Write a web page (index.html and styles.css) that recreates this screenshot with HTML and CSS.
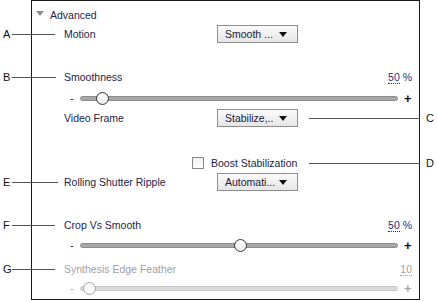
FILE: index.html
```html
<!DOCTYPE html>
<html>
<head>
<meta charset="utf-8">
<link rel="stylesheet" href="styles.css">
</head>
<body>
<div class="panel">
  <div class="hdr"><span class="tri"></span><span class="hdr-text">Advanced</span></div>

  <div class="row r-motion">
    <span class="co co-l"><span class="co-letter">A</span><span class="co-line w43"></span></span>
    <span class="lbl">Motion</span>
    <span class="dd">Smooth ...<span class="arr"></span></span>
  </div>

  <div class="row r-smooth">
    <span class="co co-l"><span class="co-letter">B</span><span class="co-line w44"></span></span>
    <span class="lbl">Smoothness</span>
    <span class="val"><span class="num">50</span> %</span>
  </div>
  <div class="srow r-s1">
    <span class="minus">-</span>
    <span class="track"><span class="thumb" style="left:21px"></span></span>
    <span class="plus">+</span>
  </div>

  <div class="row r-video">
    <span class="lbl">Video Frame</span>
    <span class="dd">Stabilize,..<span class="arr"></span></span>
    <span class="co co-r"><span class="co-line w111"></span><span class="co-letter">C</span></span>
  </div>

  <div class="row r-boost">
    <span class="chk-wrap"><span class="chk"></span><span class="chk-lbl">Boost Stabilization</span></span>
    <span class="co co-r"><span class="co-line w111"></span><span class="co-letter">D</span></span>
  </div>

  <div class="row r-roll">
    <span class="co co-l"><span class="co-letter">E</span><span class="co-line w46"></span></span>
    <span class="lbl">Rolling Shutter Ripple</span>
    <span class="dd">Automati...<span class="arr"></span></span>
  </div>

  <div class="row r-crop">
    <span class="co co-l"><span class="co-letter">F</span><span class="co-line w43"></span></span>
    <span class="lbl">Crop Vs Smooth</span>
    <span class="val"><span class="num">50</span> %</span>
  </div>
  <div class="srow r-s2">
    <span class="minus">-</span>
    <span class="track"><span class="thumb" style="left:159px"></span></span>
    <span class="plus">+</span>
  </div>

  <div class="row r-synth dis">
    <span class="co co-l"><span class="co-letter">G</span><span class="co-line w43"></span></span>
    <span class="lbl">Synthesis Edge Feather</span>
    <span class="val"><span class="num">10</span></span>
  </div>
  <div class="srow r-s3 dis">
    <span class="minus">-</span>
    <span class="track"><span class="thumb" style="left:8px"></span></span>
    <span class="plus">+</span>
  </div>
</div>
</body>
</html>
```

FILE: styles.css
```css
* { box-sizing: border-box; }
html, body { margin: 0; padding: 0; background: #ffffff; }
body {
  width: 438px;
  height: 302px;
  overflow: hidden;
  font-family: "Liberation Sans", Arial, sans-serif;
  font-size: 10.5px;
  color: #1c2448;
}
.panel {
  margin-left: 31px;
  width: 389px;
  height: 300px;
  border: 1px solid #1a1a1a;
  padding-top: 4px;
}
.hdr {
  height: 20px;
  display: flex;
  align-items: center;
  padding-left: 4px;
}
.tri {
  width: 0; height: 0;
  border-left: 4.5px solid transparent;
  border-right: 4.5px solid transparent;
  border-top: 5px solid #8f8f8f;
  margin-right: 6px;
  margin-top: -4px;
}
.hdr-text { color: #1c2448; }

.row {
  position: relative;
  height: 18px;
  display: flex;
  align-items: center;
  padding-left: 32px;
  padding-right: 7px;
}
.lbl { width: 153px; flex: none; }
.val { margin-left: auto; color: #263078; }
.num {
  border-bottom: 1px dotted #263078;
  padding-bottom: 0;
}
.r-motion { margin-top: 0; }
.r-smooth { margin-top: 25px; }
.r-s1 { margin-top: 3px; }
.r-video { margin-top: 2px; }
.r-boost { margin-top: 27px; }
.r-roll { margin-top: 1px; }
.r-crop { margin-top: 25px; }
.r-s2 { margin-top: 2px; }
.r-synth { margin-top: 6px; }
.r-s3 { margin-top: 1px; }

.dd {
  position: relative;
  width: 81px;
  height: 18px;
  border: 1px solid #8e8e8e;
  background: linear-gradient(#fbfbfb, #e6e6e6);
  display: flex;
  align-items: center;
  padding-left: 7px;
  color: #1a1a3a;
}
.arr {
  position: absolute;
  right: 10px;
  top: 6px;
  width: 0; height: 0;
  border-left: 4px solid transparent;
  border-right: 4px solid transparent;
  border-top: 5px solid #111;
}

.chk-wrap {
  display: flex;
  align-items: center;
  margin-left: 128px;
}
.chk {
  width: 12px; height: 12px;
  border: 1px solid #8a8a8a;
  background: linear-gradient(#f2f2f2, #ffffff);
  margin-right: 7px;
}

.srow {
  position: relative;
  height: 18px;
  display: flex;
  align-items: center;
  padding-left: 38px;
}
.minus { width: 10px; font-size: 11px; color: #222; }
.track {
  position: relative;
  width: 318px;
  height: 5px;
  border-radius: 3px;
  background: #a9a9a9;
  border: 1px solid #8c8c8c;
}
.thumb {
  position: absolute;
  top: -5px;
  width: 13px; height: 13px;
  margin-left: -6px;
  border-radius: 50%;
  border: 1px solid #3a3a3a;
  background: radial-gradient(circle at 50% 35%, #ffffff, #e4e4e4);
}
.plus {
  margin-left: 6px;
  font-size: 13px;
  font-weight: bold;
  color: #111;
  line-height: 1;
}

.dis .lbl, .dis .val { color: #a0a0a8; }
.dis .num { border-bottom-color: #a0a0a8; }
.dis .track { background: #dcdcdc; border-color: #c8c8c8; }
.dis .thumb { border-color: #a8a8a8; background: #fafafa; }
.dis .plus, .dis .minus { color: #a8a8a8; }

.co {
  position: absolute;
  top: 0;
  height: 18px;
  display: flex;
  align-items: center;
  font-family: "Liberation Sans", Arial, sans-serif;
  font-size: 11px;
  color: #111;
}
.co-l { left: -29px; }
.co-r { left: 277px; }
.co-letter { width: 9px; }
.co-r .co-letter { margin-left: 6px; }
.co-line { height: 1px; background: #555; }
.w43 { width: 43px; }
.w44 { width: 44px; }
.w46 { width: 46px; }
.w111 { width: 111px; }
```
